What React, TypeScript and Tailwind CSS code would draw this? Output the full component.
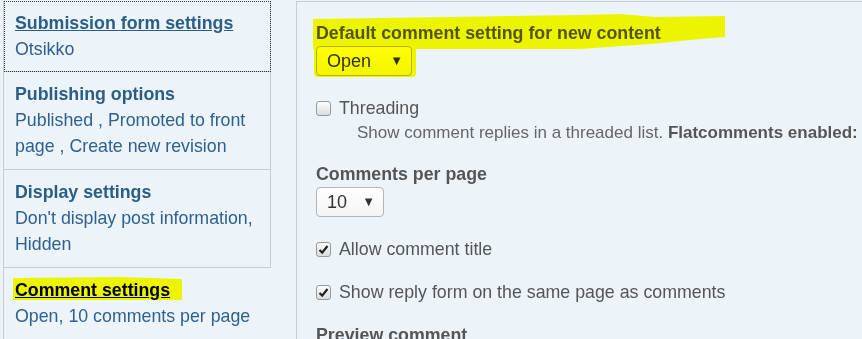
import React from 'react';

type Tab = { title: string; summary: string[]; focused?: boolean; selected?: boolean };

const tabs: Tab[] = [
  { title: 'Submission form settings', summary: ['Otsikko'], focused: true },
  { title: 'Publishing options', summary: ['Published , Promoted to front', 'page , Create new revision'] },
  { title: 'Display settings', summary: ["Don't display post information,", 'Hidden'] },
  { title: 'Comment settings', summary: ['Open, 10 comments per page'], selected: true },
];

function Checkbox({ checked }: { checked?: boolean }) {
  return (
    <span className="w-[15px] h-[15px] shrink-0 rounded-[3px] border border-[#9a9a9a] bg-gradient-to-b from-[#fdfdfd] to-[#dcdcdc] flex items-center justify-center">
      {checked && (
        <svg width="11" height="11" viewBox="0 0 11 11">
          <path d="M1.5 6 L4.2 8.6 L9.5 2" fill="none" stroke="#222" strokeWidth="2.2" />
        </svg>
      )}
    </span>
  );
}

function Select({ value, width }: { value: string; width: string }) {
  return (
    <div className={`${width} h-[30px] rounded-[4px] border border-[#b4b4b4] bg-gradient-to-b from-white to-[#f4f4f4] flex items-center justify-between pl-[10px] pr-[8px] text-[18px] text-[#333]`}>
      <span>{value}</span>
      <span className="text-[13px] text-[#333]">▼</span>
    </div>
  );
}

export default function App() {
  return (
    <div className="relative h-[339px] w-[862px] overflow-hidden bg-[#ecf4fa] font-['Liberation_Sans',Arial,sans-serif] flex">
      {/* vertical tabs */}
      <ul className="ml-[3px] mt-[1px] w-[268px] shrink-0 border-l border-[#cccccc]">
        {tabs.map((t, i) => (
          <li
            key={t.title}
            className={`px-[11px] pt-[9px] ${i === 0 ? 'pb-[9px]' : 'pb-[10px]'} leading-[26px] text-[17.8px] border-b border-[#cccccc] ${
              t.selected ? '' : 'border-r'
            } ${t.focused ? 'outline outline-1 outline-dotted outline-[#333] -outline-offset-1' : ''}`}
          >
            <div className={`font-bold ${t.selected ? 'text-black underline' : 'text-[#2b5d86]'} ${t.focused ? 'underline' : ''}`}>
              {t.title}
            </div>
            {t.summary.map((s) => (
              <div key={s} className="text-[#2e6190]">{s}</div>
            ))}
          </li>
        ))}
      </ul>

      {/* pane */}
      <div className="ml-[25px] mt-[1px] flex-1 border-l border-t border-[#cccccc] pl-[19px] pt-[18px] text-[#555] text-[17.8px] leading-[26px]">
        <div className="font-bold whitespace-nowrap">Default comment setting for new content</div>
        <Select value="Open" width="w-[96px]" />

        <label className="mt-[19px] flex items-center gap-[8px]">
          <Checkbox />
          <span>Threading</span>
        </label>
        <div className="ml-[41px] text-[17px] leading-[23px] text-[#666] whitespace-nowrap">
          Show comment replies in a threaded list. <b className="text-[#555]">Flatcomments enabled:</b>
        </div>

        <div className="mt-[17px] font-bold">Comments per page</div>
        <Select value="10" width="w-[68px]" />

        <label className="mt-[19px] flex items-center gap-[8px]">
          <Checkbox checked />
          <span>Allow comment title</span>
        </label>
        <label className="mt-[17px] flex items-center gap-[8px]">
          <Checkbox checked />
          <span>Show reply form on the same page as comments</span>
        </label>
        <div className="mt-[17px] font-bold">Preview comment</div>
      </div>

      {/* highlighter marks */}
      <svg className="absolute inset-0 pointer-events-none mix-blend-multiply" width="862" height="339">
        <polygon
          fill="#ffff00"
          points="313,19 450,17 580,15 620,14 655,17 725,16 725,37 700,39 650,44 580,49 313,49"
        />
        <rect x="314" y="43" width="102" height="34" rx="4" fill="#ffff00" />
        <polygon fill="#ffff00" points="13,278 120,277 182,279 182,300 13,300" />
      </svg>
    </div>
  );
}
